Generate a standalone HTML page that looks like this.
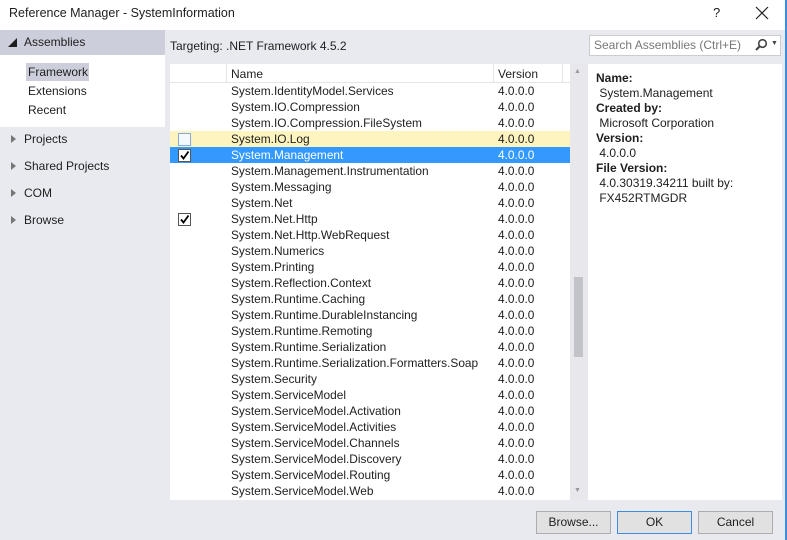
<!DOCTYPE html>
<html><head><style>
*{margin:0;padding:0;box-sizing:border-box}
body{width:787px;height:540px;overflow:hidden;background:#e9eaf0;font-family:"Liberation Sans","Noto Sans CJK KR",sans-serif;font-size:12px;color:#1e1e1e;position:relative}
.a{position:absolute}
.row{position:absolute;left:0;width:400px;height:16px;line-height:16px;font-size:11.9px}
.row .n{position:absolute;left:61px}
.row .v{position:absolute;left:328px}
.cb{position:absolute;left:8px;top:2px;width:13px;height:13px;border:1px solid #555;background:#fff}
.btn{position:absolute;top:511px;width:75px;height:23px;border:1px solid #adadad;background:#e1e1e1;text-align:center;line-height:21px}
.tri{position:absolute;left:11px;width:0;height:0;border-top:4px solid transparent;border-bottom:4px solid transparent;border-left:5px solid #777}
</style></head><body>
<div class="a" style="left:0;top:0;width:787px;height:30px;background:#fff"></div>
<div class="a" style="left:9px;top:6px;font-size:12.5px">Reference Manager - SystemInformation</div>
<div class="a" style="left:713px;top:5px;font-size:13px">?</div>
<svg class="a" style="left:755px;top:6px" width="14" height="14"><path d="M1 1L13 13M13 1L1 13" stroke="#222" stroke-width="1.2"/></svg>
<div class="a" style="left:785px;top:0;width:2px;height:540px;background:#3c8ce0"></div>
<div class="a" style="left:0;top:30px;width:165px;height:470px;background:#e9eaf0"></div>
<div class="a" style="left:0;top:30px;width:165px;height:25px;background:#cccedb"></div>
<div class="a" style="left:8px;top:36px;font-size:9px">◢</div>
<div class="a" style="left:24px;top:35px">Assemblies</div>
<div class="a" style="left:0;top:55px;width:165px;height:72px;background:#fff"></div>
<div class="a" style="left:26px;top:63px;width:63px;height:18px;background:#cccedb"></div>
<div class="a" style="left:28px;top:65px">Framework</div>
<div class="a" style="left:28px;top:84px">Extensions</div>
<div class="a" style="left:28px;top:103px">Recent</div>
<div class="tri" style="top:135px"></div><div class="a" style="left:24px;top:132px">Projects</div>
<div class="tri" style="top:162px"></div><div class="a" style="left:24px;top:159px">Shared Projects</div>
<div class="tri" style="top:189px"></div><div class="a" style="left:24px;top:186px">COM</div>
<div class="tri" style="top:216px"></div><div class="a" style="left:24px;top:213px">Browse</div>
<div class="a" style="left:170px;top:39px">Targeting: .NET Framework 4.5.2</div>
<div class="a" style="left:589px;top:35px;width:192px;height:21px;border:1px solid #ccc;background:#fff"></div>
<div class="a" style="left:594px;top:38px;color:#777">Search Assemblies (Ctrl+E)</div>
<svg class="a" style="left:754px;top:38px" width="14" height="14"><circle cx="8.5" cy="5.5" r="3.8" fill="none" stroke="#444" stroke-width="1.6"/><path d="M6 8L2 12" stroke="#444" stroke-width="2"/></svg>
<div class="a" style="left:771px;top:40px;font-size:7px;color:#444">▼</div>
<div class="a" style="left:170px;top:64px;width:400px;height:436px;background:#fff;overflow:hidden">
 <div class="a" style="left:0;top:0;width:400px;height:19px;border-bottom:1px solid #e5e5e5"></div>
 <div class="a" style="left:56px;top:0;width:1px;height:19px;background:#e5e5e5"></div>
 <div class="a" style="left:323px;top:0;width:1px;height:19px;background:#e5e5e5"></div>
 <div class="a" style="left:392px;top:0;width:1px;height:19px;background:#e5e5e5"></div>
 <div class="a" style="left:61px;top:3px">Name</div>
 <div class="a" style="left:328px;top:3px">Version</div>
 <div id="rows"></div>
</div>
<div class="a" style="left:570px;top:64px;width:18px;height:436px;background:#e8e8ec"></div>
<div class="a" style="left:574px;top:68px;font-size:7px;color:#999">▲</div>
<div class="a" style="left:574px;top:487px;font-size:7px;color:#999">▼</div>
<div class="a" style="left:574px;top:277px;width:9px;height:80px;background:#c2c3c9"></div>
<div class="a" style="left:588px;top:64px;width:194px;height:436px;background:#fff"></div>
<div class="a" style="left:596px;top:71px;line-height:15px">
<b>Name:</b><br>&nbsp;System.Management<br><b>Created by:</b><br>&nbsp;Microsoft Corporation<br><b>Version:</b><br>&nbsp;4.0.0.0<br><b>File Version:</b><br>&nbsp;4.0.30319.34211 built by:<br>&nbsp;FX452RTMGDR</div>
<div class="btn" style="left:536px">Browse...</div>
<div class="btn" style="left:617px;border-color:#3c8ce0">OK</div>
<div class="btn" style="left:698px">Cancel</div>
<script>
var names=["System.IdentityModel.Services","System.IO.Compression","System.IO.Compression.FileSystem","System.IO.Log","System.Management","System.Management.Instrumentation","System.Messaging","System.Net","System.Net.Http","System.Net.Http.WebRequest","System.Numerics","System.Printing","System.Reflection.Context","System.Runtime.Caching","System.Runtime.DurableInstancing","System.Runtime.Remoting","System.Runtime.Serialization","System.Runtime.Serialization.Formatters.Soap","System.Security","System.ServiceModel","System.ServiceModel.Activation","System.ServiceModel.Activities","System.ServiceModel.Channels","System.ServiceModel.Discovery","System.ServiceModel.Routing","System.ServiceModel.Web"];
var chk='<svg width="11" height="11" style="position:absolute;left:0;top:0"><path d="M2 5.5L4.5 8.5L9.5 1.5" fill="none" stroke="#000" stroke-width="1.8"/></svg>';
var h="";
names.forEach(function(n,i){var bg="",col="",cb="";
if(i==3){bg="background:#fdf4bf;";cb='<div class="cb" style="border-color:#8aa8d8;background:#f4f8ff"></div>';}
if(i==4){bg="background:#3399ff;";col="color:#fff;";cb='<div class="cb">'+chk+'</div>';}
if(i==8){cb='<div class="cb">'+chk+'</div>';}
h+='<div class="row" style="top:'+(19+i*16)+'px;'+bg+col+'">'+cb+'<span class="n">'+n+'</span><span class="v">4.0.0.0</span></div>';});
document.getElementById("rows").innerHTML=h;
</script>
</body></html>
